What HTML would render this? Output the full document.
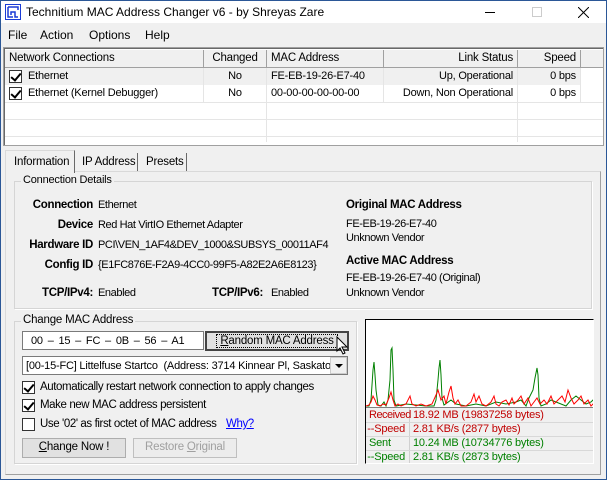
<!DOCTYPE html>
<html><head><meta charset="utf-8"><style>
*{margin:0;padding:0;box-sizing:border-box}
body{width:607px;height:480px;overflow:hidden;background:#f0f0f0;font-family:"Liberation Sans",sans-serif;font-size:11px;letter-spacing:-0.2px;color:#000;position:relative}
.a{position:absolute;white-space:nowrap}
.win{position:absolute;left:0;top:0;width:607px;height:480px;border:1px solid #2b5797;border-top:none}
.tb{position:absolute;left:0;top:0;width:607px;height:23px;background:#fff;border:1px solid #2b5797;border-bottom:none}
.lv{position:absolute;left:3px;top:47px;width:601px;height:99px;background:#fff;border:1px solid #a0a0a0;box-shadow:inset 1px 1px 0 #696969}
.hd{position:absolute;top:2px;height:18px;background:#f0f0f0;border-right:1px solid #a0a0a0;border-bottom:1px solid #a0a0a0;font-size:11.5px;line-height:17px;padding:0 4px}
.cell{position:absolute;height:17px;line-height:16px;font-size:11px;border-right:1px solid #e5e5e5;padding:0 4px}
.cb{position:absolute;width:13px;height:13px;border:1px solid #333;background:#fff}
.cb.on::after{content:"";position:absolute;left:3px;top:0px;width:4px;height:8px;border:solid #000;border-width:0 2px 2px 0;transform:rotate(40deg)}
.grp{position:absolute;border:1px solid #d5d5d5;box-shadow:1px 1px 0 #fff}
.gt{position:absolute;top:-8px;left:6px;background:#f0f0f0;padding:0 2px;font-size:11px}
.n{font-size:11px;letter-spacing:-0.4px}
.b{font-weight:bold;font-size:11.5px;letter-spacing:-0.3px}
.btn{position:absolute;border:1px solid #adadad;background:#e1e1e1;text-align:center;font-size:11.5px;line-height:17px}
.cl{font-size:11.5px;letter-spacing:-0.4px}
</style></head><body>
<div class="win"></div>
<div class="tb">
<svg class="a" style="left:4px;top:3px" width="16" height="16" viewBox="0 0 16 16"><rect x="0.5" y="0.5" width="15" height="15" fill="#fff" stroke="#1a3cd6"/><path d="M3 3h10v3M3 3v10h5M13 13h-3V8H6v3" fill="none" stroke="#1a3cd6" stroke-width="1.5"/></svg>
<div class="a" style="left:25px;top:4px;font-size:12px;letter-spacing:0">Technitium MAC Address Changer v6 - by Shreyas Zare</div>
<div class="a" style="left:484px;top:11px;width:10px;height:1px;background:#000"></div>
<div class="a" style="left:531px;top:6px;width:10px;height:10px;border:1px solid #ccc"></div>
<svg class="a" style="left:577px;top:6px" width="11" height="11"><path d="M0 0L11 11M11 0L0 11" stroke="#000" stroke-width="1"/></svg>
</div>
<div class="a" style="left:8px;top:28px;font-size:12px;letter-spacing:0">File</div>
<div class="a" style="left:40px;top:28px;font-size:12px;letter-spacing:0">Action</div>
<div class="a" style="left:89px;top:28px;font-size:12px;letter-spacing:0">Options</div>
<div class="a" style="left:145px;top:28px;font-size:12px;letter-spacing:0">Help</div>
<div class="lv">
<div class="hd" style="left:1px;width:199px">Network Connections</div>
<div class="hd" style="left:200px;width:63px;text-align:center">Changed</div>
<div class="hd" style="left:263px;width:117px">MAC Address</div>
<div class="hd" style="left:380px;width:134px;text-align:right">Link Status</div>
<div class="hd" style="left:514px;width:63px;text-align:right">Speed</div>
<div class="hd" style="left:577px;width:22px;border-right:none"></div>
<div class="a" style="left:1px;top:20px;width:576px;height:17px;background:#f0f0f0"></div>
<div class="cb on" style="left:5px;top:22px"></div>
<div class="cell" style="left:20px;top:20px;width:180px">Ethernet</div>
<div class="cell" style="left:200px;top:20px;width:63px;text-align:center">No</div>
<div class="cell" style="left:263px;top:20px;width:117px">FE-EB-19-26-E7-40</div>
<div class="cell" style="left:380px;top:20px;width:134px;text-align:right">Up, Operational</div>
<div class="cell" style="left:514px;top:20px;width:63px;text-align:right">0 bps</div>
<div class="cb on" style="left:5px;top:39px"></div>
<div class="cell" style="left:20px;top:37px;width:180px">Ethernet (Kernel Debugger)</div>
<div class="cell" style="left:200px;top:37px;width:63px;text-align:center">No</div>
<div class="cell" style="left:263px;top:37px;width:117px">00-00-00-00-00-00</div>
<div class="cell" style="left:380px;top:37px;width:134px;text-align:right">Down, Non Operational</div>
<div class="cell" style="left:514px;top:37px;width:63px;text-align:right">0 bps</div>
<div class="cell" style="left:200px;top:54px;width:63px;border-top:1px solid #e5e5e5;height:40px"></div>
<div class="cell" style="left:380px;top:54px;width:134px;border-top:1px solid #e5e5e5;height:40px"></div>
<div class="a" style="left:1px;top:54px;width:598px;height:1px;background:#e5e5e5"></div>
<div class="a" style="left:1px;top:71px;width:598px;height:1px;background:#e5e5e5"></div>
<div class="a" style="left:1px;top:88px;width:598px;height:1px;background:#e5e5e5"></div>
</div>
<!-- tab page -->
<div class="a" style="left:5px;top:171px;width:596px;height:304px;border:1px solid #d9d9d9;border-right-color:#a0a0a0;border-bottom-color:#a0a0a0;background:#f0f0f0"></div>
<div class="a" style="left:5px;top:150px;width:70px;height:23px;background:#f0f0f0;border:1px solid #d9d9d9;border-right:1px solid #696969;border-bottom:none;padding:5px 0 0 8px;font-size:11.5px">Information</div>
<div class="a" style="left:76px;top:153px;width:62px;height:18px;border-right:1px solid #696969;padding:3px 0 0 6px;font-size:11.5px">IP Address</div>
<div class="a" style="left:139px;top:153px;width:48px;height:18px;border-right:1px solid #696969;padding:3px 0 0 7px;font-size:11.5px">Presets</div>
<div class="grp" style="left:14px;top:181px;width:578px;height:128px"><div class="gt">Connection Details</div></div>
<div class="a b" style="right:514px;top:199px">Connection</div><div class="a n" style="left:98px;top:199px">Ethernet</div>
<div class="a b" style="right:514px;top:219px">Device</div><div class="a n" style="left:98px;top:219px">Red Hat VirtIO Ethernet Adapter</div>
<div class="a b" style="right:514px;top:239px">Hardware ID</div><div class="a n" style="left:98px;top:239px;width:234px;overflow:hidden">PCI\VEN_1AF4&amp;DEV_1000&amp;SUBSYS_00011AF4</div>
<div class="a b" style="right:514px;top:259px">Config ID</div><div class="a n" style="left:98px;top:259px">{E1FC876E-F2A9-4CC0-99F5-A82E2A6E8123}</div>
<div class="a b" style="right:514px;top:287px">TCP/IPv4:</div><div class="a n" style="left:98px;top:287px">Enabled</div>
<div class="a b" style="right:344px;top:287px">TCP/IPv6:</div><div class="a n" style="left:271px;top:287px">Enabled</div>
<div class="a b" style="left:346px;top:199px">Original MAC Address</div>
<div class="a n" style="left:346px;top:218px">FE-EB-19-26-E7-40</div>
<div class="a n" style="left:346px;top:232px">Unknown Vendor</div>
<div class="a b" style="left:346px;top:255px">Active MAC Address</div>
<div class="a n" style="left:346px;top:272px">FE-EB-19-26-E7-40 (Original)</div>
<div class="a n" style="left:346px;top:287px">Unknown Vendor</div>
<div class="grp" style="left:14px;top:321px;width:343px;height:143px"><div class="gt" style="font-size:11.5px">Change MAC Address</div></div>
<div class="a" style="left:22px;top:331px;width:182px;height:19px;background:#fff;border:1px solid #7a7a7a;padding:3px 0 0 8px;word-spacing:2px">00 – 15 – FC – 0B – 56 – A1</div>
<div class="btn" style="left:205px;top:331px;width:144px;height:20px;border:2px solid #444;background:#e1e1e1"><span style="border:1px dotted #000;padding:0 3px"><u>R</u>andom MAC Address</span></div>
<svg class="a" style="left:336px;top:336px" width="14" height="20"><path d="M1 1L1 15L4 12L7 18L9 17L6 11L11 11Z" fill="#fff" stroke="#000"/></svg>
<div class="a" style="left:22px;top:356px;width:326px;height:19px;background:#fff;border:1px solid #7a7a7a;padding:3px 0 0 3px;overflow:hidden">[00-15-FC] Littelfuse Startco&nbsp; (Address: 3714 Kinnear Pl, Saskatoon</div>
<div class="a" style="left:330px;top:357px;width:17px;height:17px;background:#f0f0f0;border:1px solid #ccc"></div>
<div class="a" style="left:335px;top:364px;width:0;height:0;border:4px solid transparent;border-top:4px solid #000"></div>
<div class="cb on" style="left:22px;top:381px"></div><div class="a cl" style="left:40px;top:381px">Automatically restart network connection to apply changes</div>
<div class="cb on" style="left:22px;top:399px"></div><div class="a cl" style="left:40px;top:399px">Make new MAC address persistent</div>
<div class="cb" style="left:22px;top:418px"></div><div class="a cl" style="left:40px;top:418px">Use '02' as first octet of MAC address</div>
<div class="a cl" style="left:226px;top:418px;color:#00f;text-decoration:underline">Why?</div>
<div class="btn" style="left:22px;top:438px;width:104px;height:20px"><u>C</u>hange Now !</div>
<div class="btn" style="left:133px;top:438px;width:104px;height:20px;color:#a0a0a0;border-color:#bfbfbf;background:#ececec">Restore <u>O</u>riginal</div>
<div class="a" style="left:365px;top:319px;width:229px;height:145px;border:1px solid #000;border-right-color:#fff;border-bottom-color:#fff;background:#fff;overflow:hidden">
<svg width="229" height="88" style="position:absolute;left:0;top:0">
<polyline fill="none" stroke="#008000" stroke-width="1" points="0,86 3,86 5,80 7,50 8,42 9,55 10,70 12,85 15,86 18,82 20,86 22,80 24,60 25,30 26,28 27,50 28,80 30,86 40,84 50,85 60,86 68,86 70,80 72,60 73,48 74,40 75,55 76,78 78,85 85,80 90,84 100,86 110,84 120,86 130,82 140,84 150,82 155,80 160,86 163,78 167,70 169,58 171,48 172,55 173,78 175,86 180,84 185,80 190,82 200,86 205,80 210,76 215,80 220,84 225,82 229,78"/>
<polyline fill="none" stroke="#ff0000" stroke-width="1" points="0,86 3,85 5,82 7,76 9,80 11,85 14,86 17,84 20,85 23,78 25,72 27,80 29,86 32,84 35,86 40,84 44,76 46,84 50,86 55,84 60,86 66,84 70,75 72,70 75,80 78,76 80,84 83,72 85,66 87,78 89,84 92,80 95,86 100,86 105,82 108,74 110,82 113,76 116,84 120,86 125,82 128,76 130,84 133,86 136,82 140,80 143,85 146,78 148,84 152,80 155,76 158,84 162,78 165,86 168,82 171,78 174,84 178,80 181,84 185,76 188,84 192,80 196,76 199,82 202,70 205,78 208,84 212,80 215,76 218,84 222,80 225,86 229,82"/>
</svg>
<div style="position:absolute;left:0;top:87px;width:229px;height:1px;background:#808080"></div>
<div style="position:absolute;left:0;top:88px;width:229px;height:57px;background:#f0f0f0"></div>
<div style="position:absolute;left:43px;top:88px;width:1px;height:57px;background:#d0d0d0"></div>
<div style="position:absolute;left:0;top:102px;width:229px;height:1px;background:#d8d8d8"></div>
<div style="position:absolute;left:0;top:116px;width:229px;height:1px;background:#d8d8d8"></div>
<div style="position:absolute;left:0;top:130px;width:229px;height:1px;background:#d8d8d8"></div>
<div class="a" style="left:3px;top:89px;color:#c00000;letter-spacing:-0.5px">Received</div><div class="a" style="left:47px;top:89px;color:#c00000">18.92 MB (19837258 bytes)</div>
<div class="a" style="right:188px;top:103px;color:#c00000">--Speed</div><div class="a" style="left:47px;top:103px;color:#c00000">2.81 KB/s (2877 bytes)</div>
<div class="a" style="left:3px;top:117px;color:#008000">Sent</div><div class="a" style="left:47px;top:117px;color:#008000">10.24 MB (10734776 bytes)</div>
<div class="a" style="right:188px;top:131px;color:#008000">--Speed</div><div class="a" style="left:47px;top:131px;color:#008000">2.81 KB/s (2873 bytes)</div>
</div>
</body></html>
